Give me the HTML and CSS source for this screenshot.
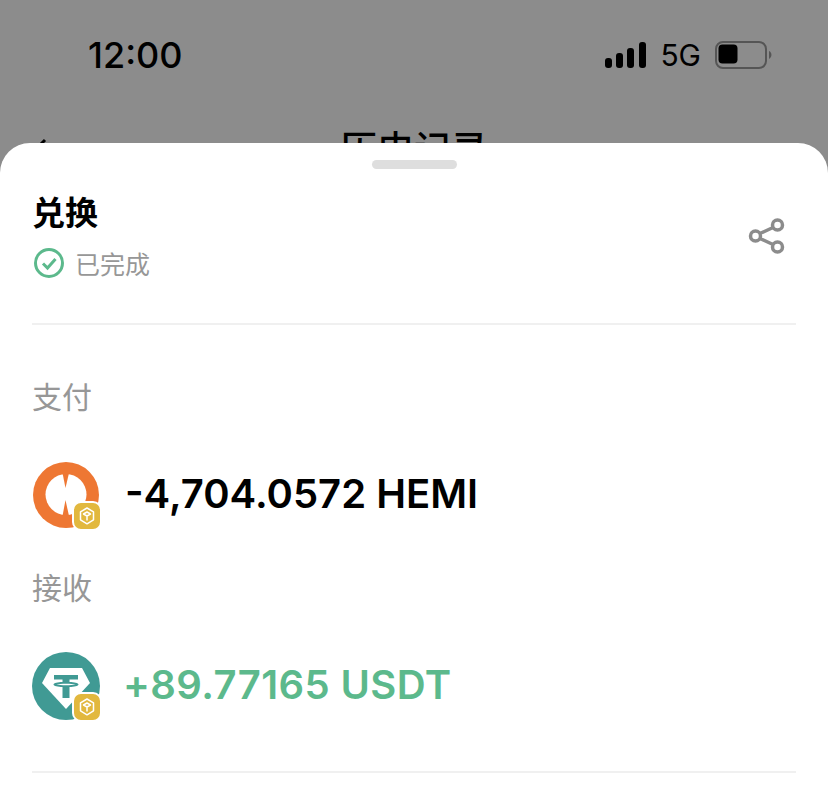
FILE: index.html
```html
<!DOCTYPE html>
<html>
<head>
	<meta charset="utf-8">
	<meta name="viewport" content="width=device-width, initial-scale=1">
	<title>兑换</title>
	<link rel="stylesheet" href="styles.css">
</head>
<body>
	<div class="top">
		<div class="status">
			<span class="clock">12:00</span>
			<div class="status-right">
				<svg class="signal" width="41" height="26" viewBox="0 0 41 26">
					<rect x="0" y="16" width="7" height="10" rx="3" fill="#000"/>
					<rect x="11" y="11" width="7" height="15" rx="3" fill="#000"/>
					<rect x="22" y="6" width="7" height="20" rx="3" fill="#000"/>
					<rect x="34" y="0" width="7" height="26" rx="3" fill="#000"/>
				</svg>
				<span class="net">5G</span>
				<svg class="battery" width="58" height="28" viewBox="0 0 58 28">
					<rect x="1" y="1" width="50" height="26" rx="7" fill="none" stroke="#555" stroke-width="2"/>
					<rect x="3.500" y="3.500" width="19" height="19" rx="4" fill="#000"/>
					<path d="M54 10 C57 11 57.500 16 54 18 Z" fill="#555"/>
				</svg>
			</div>
		</div>
		<div class="nav">
			<svg class="back" width="20" height="30" viewBox="0 0 20 30"><path d="M16 2 L4 14 L16 26" fill="none" stroke="#000" stroke-width="3"/></svg>
			<span class="nav-title">历史记录</span>
		</div>
	</div>

	<div class="sheet">
		<div class="handle"></div>
		<div class="head">
			<div>
				<div class="title">兑换</div>
				<div class="state">
					<svg class="check" width="32" height="32" viewBox="0 0 32 32">
						<circle cx="16" cy="16" r="13.500" fill="none" stroke="#5cb98c" stroke-width="3"/>
						<path d="M10 16.500 L14.500 21 L22.500 12" fill="none" stroke="#5cb98c" stroke-width="3"/>
					</svg>
					<span>已完成</span>
				</div>
			</div>
			<svg class="share" width="38" height="38" viewBox="0 0 38 38">
				<g fill="none" stroke="#8c8c8c" stroke-width="3.500">
					<circle cx="7.500" cy="19" r="5"/>
					<circle cx="29.500" cy="8" r="5"/>
					<circle cx="29.500" cy="30" r="5"/>
					<path d="M12 16.500 L25 10.500 M12 21.500 L25 27.500"/>
				</g>
			</svg>
		</div>

		<div class="label pay-label">支付</div>
		<div class="row pay">
			<div class="coin">
				<svg width="68" height="68" viewBox="0 0 68 68">
					<circle cx="34" cy="34" r="33" fill="#ee7733"/>
					<circle cx="34" cy="33.500" r="20.500" fill="#fff"/>
					<path d="M30.500 12 H37 L33.500 27 Z" fill="#ee7733"/>
					<path d="M30.500 55 H37 L33.500 39 Z" fill="#ee7733"/>
				</svg>
				<div class="chain">
					<svg width="20" height="20" viewBox="0 0 20 20">
						<g fill="none" stroke="#fff" stroke-width="1.500" stroke-linejoin="round">
							<path d="M10 2 L16.500 5.800 V13.800 L10 17.800 L3.500 13.800 V5.800 Z"/>
							<path d="M6.500 8 L10 10 L13.500 8 L10 6 Z M10 10 V14.500"/>
						</g>
					</svg>
				</div>
			</div>
			<span class="amount">-4,704.0572 HEMI</span>
		</div>

		<div class="label">接收</div>
		<div class="row get">
			<div class="coin">
				<svg width="68" height="68" viewBox="0 0 68 68">
					<circle cx="34" cy="34" r="34" fill="#409a94"/>
					<path d="M18 16 H50 L58 31 L34 57 L10 31 Z" fill="#fff"/>
					<path d="M22 23 H46 V27.500 H37.500 V30 C42 30.200 46.500 31 46.500 32.500 C46.500 34 42 34.800 37.500 35 V46 H30.500 V35 C26 34.800 21.500 34 21.500 32.500 C21.500 31 26 30.200 30.500 30 V27.500 H22 Z" fill="#409a94"/>
					<path d="M24.500 32.500 C28 33.500 40 33.500 43.500 32.500 C40 31.500 28 31.500 24.500 32.500 Z" fill="#fff"/>
				</svg>
				<div class="chain">
					<svg width="20" height="20" viewBox="0 0 20 20">
						<g fill="none" stroke="#fff" stroke-width="1.500" stroke-linejoin="round">
							<path d="M10 2 L16.500 5.800 V13.800 L10 17.800 L3.500 13.800 V5.800 Z"/>
							<path d="M6.500 8 L10 10 L13.500 8 L10 6 Z M10 10 V14.500"/>
						</g>
					</svg>
				</div>
			</div>
			<span class="amount green">+89.77165 USDT</span>
		</div>
		<div class="line"></div>
	</div>
</body>
</html>
```

FILE: styles.css
```css
html, body {
	margin: 0;
	padding: 0;
}
body {
	width: 828px;
	height: 802px;
	overflow: hidden;
	background: #fff;
	font-family: Inter, "Noto Sans CJK SC", sans-serif;
}
.top {
	height: 173px;
	background: #8c8c8c;
	overflow: hidden;
}
.status {
	display: flex;
	justify-content: space-between;
	align-items: center;
	height: 50px;
	padding: 30px 55px 0 88px;
}
.clock {
	font-size: 36px;
	font-weight: 500;
	color: #000;
}
.status-right {
	display: flex;
	align-items: center;
	gap: 14px;
}
.net {
	font-size: 30px;
	color: #000;
}
.nav {
	display: flex;
	align-items: center;
	justify-content: center;
	height: 40px;
	margin-top: 47px;
	position: relative;
}
.back {
	position: absolute;
	left: 29px;
	top: 11px;
}
.nav-title {
	font-size: 37px;
	font-weight: 500;
	color: #000;
}
.sheet {
	height: 659px;
	background: #fff;
	border-radius: 30px 30px 0 0;
	margin-top: -30px;
	padding: 17px 32px 0;
	position: relative;
	box-sizing: border-box;
}
.handle {
	width: 85px;
	height: 9px;
	border-radius: 5px;
	background: #dedede;
	margin: 0 auto;
}
.head {
	display: flex;
	justify-content: space-between;
	align-items: flex-start;
	height: 132px;
	padding: 22px 10px 0 0;
	border-bottom: 2px solid #f0f0f0;
}
.title {
	font-size: 33px;
	font-weight: 700;
	color: #000;
	line-height: 44px;
}
.state {
	display: flex;
	align-items: center;
	gap: 10px;
	margin-top: 10px;
	font-size: 25px;
	color: #979797;
}
.check {
	margin-left: 1px;
}
.share {
	margin-top: 26px;
}
.label {
	font-size: 30px;
	color: #979797;
	line-height: 40px;
}
.pay-label {
	margin-top: 52px;
}
.row {
	display: flex;
	align-items: center;
	gap: 25px;
	height: 68px;
	margin-top: 44px;
}
.pay {
	margin-bottom: 39px;
}
.get {
	gap: 23px;
	margin-bottom: 51px;
}
.coin {
	width: 68px;
	height: 68px;
	position: relative;
}
.coin > svg {
	display: block;
}
.chain {
	position: absolute;
	right: -2px;
	bottom: -2px;
	width: 26px;
	height: 26px;
	display: flex;
	align-items: center;
	justify-content: center;
	background: #e2b83e;
	border: 2px solid #fff;
	border-radius: 9px;
}
.amount {
	font-size: 40px;
	font-weight: 600;
	color: #000;
	margin-bottom: 4px;
}
.green {
	color: #5cb98c;
	letter-spacing: 0.4px;
}
.line {
	height: 2px;
	background: #f0f0f0;
}
```
